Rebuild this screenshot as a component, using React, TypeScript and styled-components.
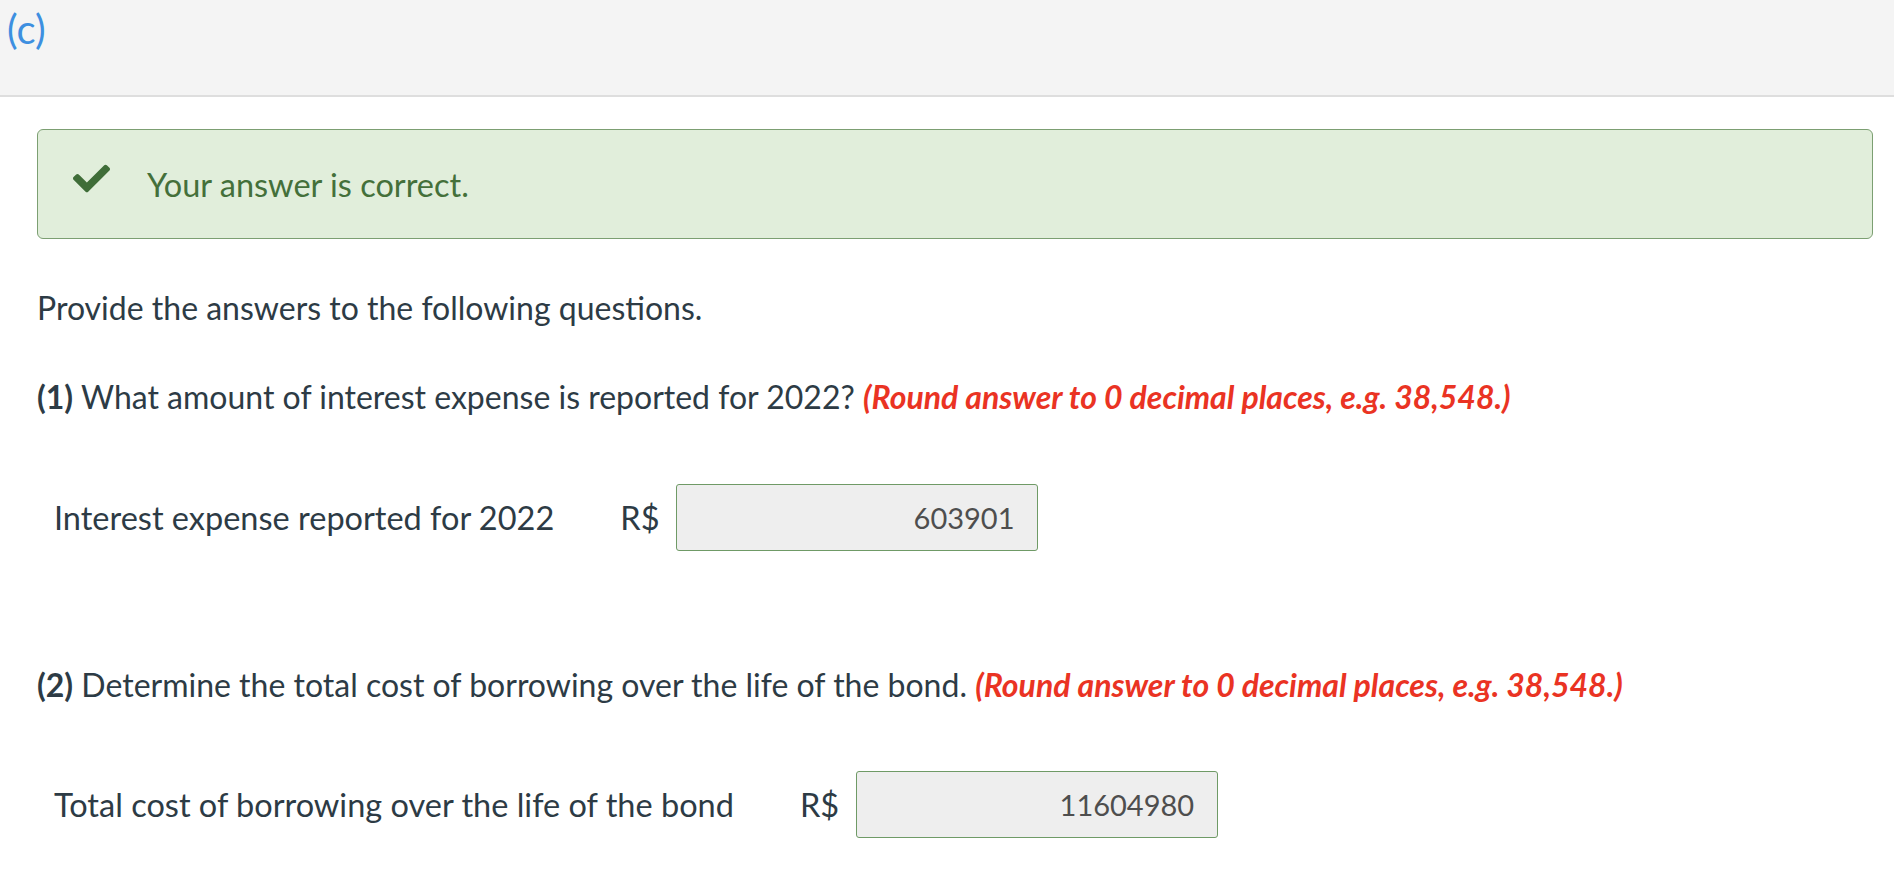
import React from 'react'
import styled, { createGlobalStyle } from 'styled-components'
import { FaCheck } from 'react-icons/fa'

const Global = createGlobalStyle`
  body {
    margin: 0;
    background: #fff;
    font-family: Lato, "Open Sans", sans-serif;
    color: #2d3b45;
  }
`

const Header = styled.div`
  height: 97px;
  background-color: #f4f4f4;
  border-bottom: 2px solid #dedede;
  padding: 5px 0 0 7px;
  box-sizing: border-box;
`

const PartLabel = styled.span`
  font-size: 40px;
  line-height: 1.2;
  color: #3d8fe0;
`

const Content = styled.div`
  padding: 0 21px 40px 37px;
`

const Notice = styled.div`
  margin-top: 32px;
  height: 110px;
  box-sizing: border-box;
  border: 1px solid #7c9f72;
  border-radius: 6px;
  background-color: #e1eedb;
  display: flex;
  align-items: center;
  padding-left: 35px;
  color: #44703a;
  font-size: 32.5px;
`

const CheckIcon = styled(FaCheck)`
  width: 37px;
  height: 37px;
  color: #3f6d38;
  margin-right: 37px;
  margin-bottom: 12px;
`

const Paragraph = styled.p<{ $top: number }>`
  margin: ${(p) => p.$top}px 0 0;
  font-size: 32px;
  line-height: 42px;
`

const Hint = styled.span`
  color: #ea3323;
  font-weight: 700;
  font-style: italic;
`

const AnswerRow = styled.div<{ $top: number }>`
  margin-top: ${(p) => p.$top}px;
  padding-left: 17px;
  display: flex;
  align-items: center;
  font-size: 32.5px;
`

const Label = styled.span`
  margin-right: 66px;
`

const Currency = styled.span`
  margin-right: 17px;
`

const ValueBox = styled.div`
  width: 362px;
  height: 67px;
  box-sizing: border-box;
  border: 1px solid #6f9a66;
  border-radius: 3px;
  background-color: #eeeeee;
  display: flex;
  align-items: center;
  justify-content: flex-end;
  padding-right: 23px;
  font-size: 29px;
  color: #4e4e4e;
`

const questions = [
  {
    num: '(1)',
    text: 'What amount of interest expense is reported for 2022?',
    label: 'Interest expense reported for 2022',
    value: '603901',
    qTop: 47,
    rowTop: 66,
  },
  {
    num: '(2)',
    text: 'Determine the total cost of borrowing over the life of the bond.',
    label: 'Total cost of borrowing over the life of the bond',
    value: '11604980',
    qTop: 113,
    rowTop: 65,
  },
]

export default function App() {
  return (
    <>
      <Global />
      <Header>
        <PartLabel>(c)</PartLabel>
      </Header>
      <Content>
        <Notice>
          <CheckIcon />
          <span>Your answer is correct.</span>
        </Notice>
        <Paragraph $top={48}>Provide the answers to the following questions.</Paragraph>
        {questions.map((q) => (
          <React.Fragment key={q.num}>
            <Paragraph $top={q.qTop}>
              <strong>{q.num}</strong> {q.text}{' '}
              <Hint>(Round answer to 0 decimal places, e.g. 38,548.)</Hint>
            </Paragraph>
            <AnswerRow $top={q.rowTop}>
              <Label>{q.label}</Label>
              <Currency>R$</Currency>
              <ValueBox>{q.value}</ValueBox>
            </AnswerRow>
          </React.Fragment>
        ))}
      </Content>
    </>
  )
}
